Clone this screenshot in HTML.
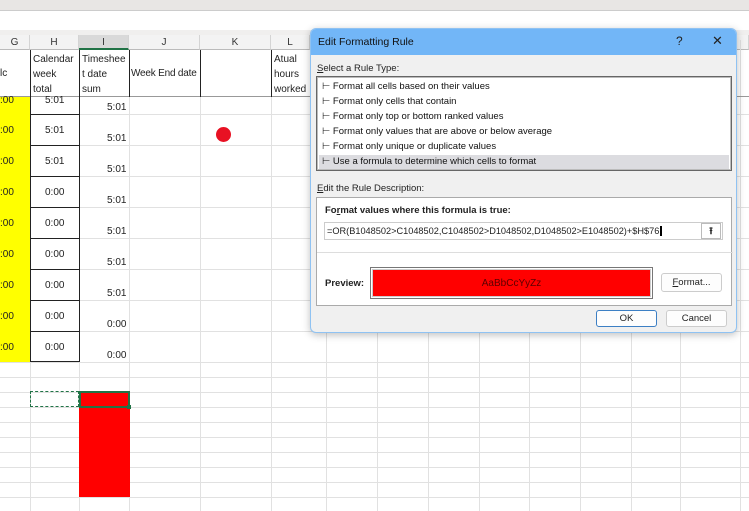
<!DOCTYPE html>
<html><head><style>
*{margin:0;padding:0;box-sizing:border-box}
body{width:749px;height:511px;overflow:hidden;background:#fff;font-family:"Liberation Sans",sans-serif;position:relative;font-size:10px;color:#222}
.a{position:absolute}
.vl{position:absolute;width:1px;background:#e1e1e1}
.hl{position:absolute;height:1px;background:#e1e1e1}
.ch{position:absolute;top:35px;height:15px;background:#f3f3f3;border-right:1px solid #d4d4d4;border-bottom:1px solid #bbb;text-align:center;font-size:10px;line-height:15px;color:#333}
.t{position:absolute;font-size:10px}
.dlg{position:absolute;left:310px;top:28px;width:427px;height:305px;background:#f0f0f0;border:1px solid #8fc2f2;border-radius:6px;box-shadow:0 2px 8px rgba(0,0,0,.25);overflow:hidden}
.li{position:absolute;left:5px;font-size:9.5px;color:#111}
</style></head><body>
<div class="a" style="left:0;top:0;width:749px;height:10px;background:#e8e6e4"></div>
<div class="a" style="left:0;top:10px;width:749px;height:1px;background:#ccc"></div>
<div class="a" style="left:0;top:30px;width:749px;height:5px;background:#f0efee"></div>
<div class="ch" style="left:0;width:30px">G</div>
<div class="ch" style="left:30px;width:49px">H</div>
<div class="ch" style="left:79px;width:50px;background:#d9d9d9;border-bottom:2px solid #217346">I</div>
<div class="ch" style="left:129px;width:71px">J</div>
<div class="ch" style="left:200px;width:71px">K</div>
<div class="ch" style="left:271px;width:39px">L</div>
<div class="ch" style="left:310px;width:439px"></div>
<div class="vl" style="left:30px;top:50px;height:461px"></div>
<div class="vl" style="left:79px;top:50px;height:461px"></div>
<div class="vl" style="left:129px;top:50px;height:461px"></div>
<div class="vl" style="left:200px;top:50px;height:461px"></div>
<div class="vl" style="left:271px;top:50px;height:461px"></div>
<div class="vl" style="left:326px;top:330px;height:181px"></div>
<div class="vl" style="left:377px;top:330px;height:181px"></div>
<div class="vl" style="left:428px;top:330px;height:181px"></div>
<div class="vl" style="left:479px;top:330px;height:181px"></div>
<div class="vl" style="left:529px;top:330px;height:181px"></div>
<div class="vl" style="left:580px;top:330px;height:181px"></div>
<div class="vl" style="left:631px;top:330px;height:181px"></div>
<div class="vl" style="left:680px;top:330px;height:181px"></div>
<div class="vl" style="left:740px;top:40px;height:471px"></div>
<div class="hl" style="left:0;top:96px;width:749px;background:#999"></div>
<div class="hl" style="left:0;top:114px;width:749px"></div>
<div class="hl" style="left:0;top:145px;width:749px"></div>
<div class="hl" style="left:0;top:176px;width:749px"></div>
<div class="hl" style="left:0;top:207px;width:749px"></div>
<div class="hl" style="left:0;top:238px;width:749px"></div>
<div class="hl" style="left:0;top:269px;width:749px"></div>
<div class="hl" style="left:0;top:300px;width:749px"></div>
<div class="hl" style="left:0;top:331px;width:749px"></div>
<div class="hl" style="left:0;top:362px;width:749px"></div>
<div class="hl" style="left:0;top:377px;width:749px"></div>
<div class="hl" style="left:0;top:392px;width:749px"></div>
<div class="hl" style="left:0;top:407px;width:749px"></div>
<div class="hl" style="left:0;top:422px;width:749px"></div>
<div class="hl" style="left:0;top:437px;width:749px"></div>
<div class="hl" style="left:0;top:452px;width:749px"></div>
<div class="hl" style="left:0;top:467px;width:749px"></div>
<div class="hl" style="left:0;top:482px;width:749px"></div>
<div class="hl" style="left:0;top:497px;width:749px"></div>
<div class="a" style="left:30px;top:50px;width:1px;height:47px;background:#222"></div>
<div class="a" style="left:79px;top:50px;width:1px;height:47px;background:#222"></div>
<div class="a" style="left:129px;top:50px;width:1px;height:47px;background:#222"></div>
<div class="a" style="left:200px;top:50px;width:1px;height:47px;background:#222"></div>
<div class="a" style="left:271px;top:50px;width:1px;height:47px;background:#222"></div>
<div class="t" style="left:0;top:68px">lc</div>
<div class="t" style="left:33px;top:52px;line-height:15px">Calendar<br>week<br>total</div>
<div class="t" style="left:82px;top:52px;line-height:15px">Timeshee<br>t date<br>sum</div>
<div class="t" style="left:131px;top:68px;letter-spacing:-0.2px">Week End date</div>
<div class="t" style="left:274px;top:52px;line-height:15px">Atual<br>hours<br>worked</div>
<div class="a" style="left:0;top:97px;width:30px;height:265px;background:#ffff00"></div>
<div class="a" style="left:30px;top:97px;width:1px;height:265px;background:#222"></div>
<div class="a" style="left:79px;top:97px;width:1px;height:265px;background:#222"></div>
<div class="a" style="left:30px;top:114px;width:49px;height:1px;background:#222"></div>
<div class="a" style="left:30px;top:145px;width:49px;height:1px;background:#222"></div>
<div class="a" style="left:30px;top:176px;width:49px;height:1px;background:#222"></div>
<div class="a" style="left:30px;top:207px;width:49px;height:1px;background:#222"></div>
<div class="a" style="left:30px;top:238px;width:49px;height:1px;background:#222"></div>
<div class="a" style="left:30px;top:269px;width:49px;height:1px;background:#222"></div>
<div class="a" style="left:30px;top:300px;width:49px;height:1px;background:#222"></div>
<div class="a" style="left:30px;top:331px;width:49px;height:1px;background:#222"></div>
<div class="a" style="left:30px;top:361px;width:49px;height:1px;background:#222"></div>
<div class="t" style="left:0;top:95px">:00</div><div class="t" style="left:45px;top:95px">5:01</div><div class="t" style="left:107px;top:102px">5:01</div>
<div class="t" style="left:0;top:125px">:00</div><div class="t" style="left:45px;top:125px">5:01</div><div class="t" style="left:107px;top:133px">5:01</div>
<div class="t" style="left:0;top:156px">:00</div><div class="t" style="left:45px;top:156px">5:01</div><div class="t" style="left:107px;top:164px">5:01</div>
<div class="t" style="left:0;top:187px">:00</div><div class="t" style="left:45px;top:187px">0:00</div><div class="t" style="left:107px;top:195px">5:01</div>
<div class="t" style="left:0;top:218px">:00</div><div class="t" style="left:45px;top:218px">0:00</div><div class="t" style="left:107px;top:226px">5:01</div>
<div class="t" style="left:0;top:249px">:00</div><div class="t" style="left:45px;top:249px">0:00</div><div class="t" style="left:107px;top:257px">5:01</div>
<div class="t" style="left:0;top:280px">:00</div><div class="t" style="left:45px;top:280px">0:00</div><div class="t" style="left:107px;top:288px">5:01</div>
<div class="t" style="left:0;top:311px">:00</div><div class="t" style="left:45px;top:311px">0:00</div><div class="t" style="left:107px;top:319px">0:00</div>
<div class="t" style="left:0;top:342px">:00</div><div class="t" style="left:45px;top:342px">0:00</div><div class="t" style="left:107px;top:350px">0:00</div>
<div class="a" style="left:216px;top:127px;width:15px;height:15px;border-radius:50%;background:#e81123"></div>
<div class="a" style="left:79px;top:392px;width:51px;height:105px;background:#ff0000"></div>
<div class="a" style="left:79px;top:391px;width:51px;height:17px;border:2px solid #217346"></div>
<div class="a" style="left:127px;top:405px;width:4px;height:4px;background:#217346"></div>
<div class="a" style="left:30px;top:391px;width:49px;height:16px;border:1px dashed #217346"></div>
<div class="dlg">
 <div class="a" style="left:0;top:0;width:427px;height:26px;background:#72b6f7"></div>
 <div class="a" style="left:7px;top:7px;font-size:10.5px;color:#111">Edit Formatting Rule</div>
 <div class="a" style="left:365px;top:5px;font-size:12px">?</div>
 <div class="a" style="left:401px;top:4px;font-size:13px">✕</div>
 <div class="a" style="left:6px;top:34px;font-size:9.5px"><u>S</u>elect a Rule Type:</div>
 <div class="a" style="left:5px;top:47px;width:416px;height:95px;background:#fff;border:1px solid #666;box-shadow:inset 0 0 0 1px #bbb">
  <div class="li" style="top:4px">⊢ Format all cells based on their values</div>
  <div class="li" style="top:19px">⊢ Format only cells that contain</div>
  <div class="li" style="top:34px">⊢ Format only top or bottom ranked values</div>
  <div class="li" style="top:49px">⊢ Format only values that are above or below average</div>
  <div class="li" style="top:64px">⊢ Format only unique or duplicate values</div>
  <div class="a" style="left:2px;top:78px;width:410px;height:14px;background:#dcdce0"></div>
  <div class="li" style="top:79px">⊢ Use a formula to determine which cells to format</div>
 </div>
 <div class="a" style="left:6px;top:154px;font-size:9.5px"><u>E</u>dit the Rule Description:</div>
 <div class="a" style="left:5px;top:168px;width:416px;height:109px;background:#fff;border:1px solid #aaa">
  <div class="a" style="left:8px;top:7px;font-size:9.5px;font-weight:bold">Fo<u>r</u>mat values where this formula is true:</div>
  <div class="a" style="left:7px;top:24px;width:399px;height:18px;border:1px solid #ccc;font-size:9.2px;line-height:16px;padding-left:2px;white-space:nowrap">=OR(B1048502&gt;C1048502,C1048502&gt;D1048502,D1048502&gt;E1048502)+$H$76<span style="border-left:2px solid #000;margin-left:1px"></span></div>
  <div class="a" style="left:384px;top:25px;width:20px;height:16px;border:1px solid #bbb;text-align:center;font-size:10px;line-height:15px;font-weight:bold">⭱</div>
  <div class="a" style="left:0;top:54px;width:416px;height:1px;background:#ddd"></div>
  <div class="a" style="left:8px;top:80px;font-size:9.5px;font-weight:bold">Preview:</div>
  <div class="a" style="left:53px;top:69px;width:283px;height:32px;border:1px solid #777;background:#fff;padding:1px"><div style="width:100%;height:100%;background:#f00;border:1px solid #ccc;text-align:center;line-height:27px;font-size:10px;color:#5a0000">AaBbCcYyZz</div></div>
  <div class="a" style="left:344px;top:75px;width:61px;height:19px;border:1px solid #ccc;border-radius:3px;background:#fdfdfd;text-align:center;line-height:17px;font-size:9.5px"><u>F</u>ormat...</div>
 </div>
 <div class="a" style="left:285px;top:281px;width:61px;height:17px;border:1px solid #3c7fc4;border-radius:3px;background:#fdfdfd;text-align:center;line-height:15px;font-size:9.5px">OK</div>
 <div class="a" style="left:355px;top:281px;width:61px;height:17px;border:1px solid #ccc;border-radius:3px;background:#fdfdfd;text-align:center;line-height:15px;font-size:9.5px">Cancel</div>
</div>
</body></html>
